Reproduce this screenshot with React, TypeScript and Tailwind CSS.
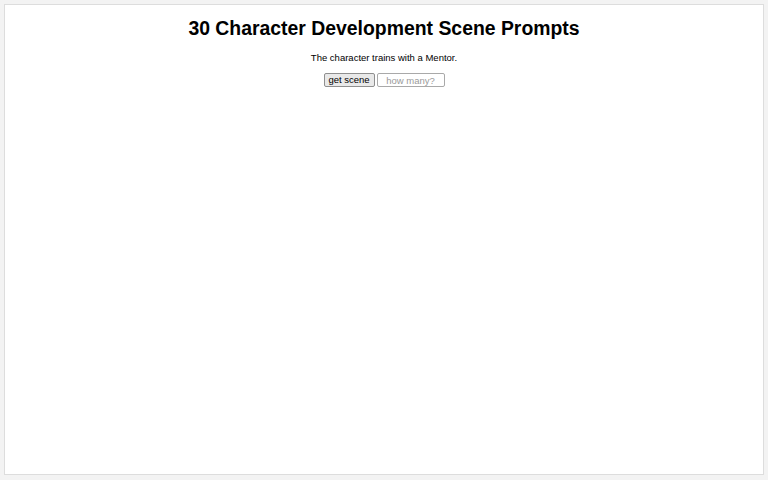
import { useState } from "react";

const App = () => {
    const [count, setCount] = useState("");

    return (
        <div className="min-h-[480px] bg-[#f3f3f3] p-1 font-['Liberation_Sans',Arial,sans-serif]">
            <div className="h-[471px] bg-white border border-[#dddddd] flex flex-col items-center">
                <h1 className="mt-[12px] text-[19.4px] leading-[22px] font-bold text-black">
                    30 Character Development Scene Prompts
                </h1>
                <p className="mt-[13px] text-[9.5px] leading-[12px] text-black">
                    The character trains with a Mentor.
                </p>
                <div className="mt-[9px] flex items-center gap-[2px]">
                    <button className="h-[14px] w-[51px] text-[9.5px] leading-[12px] text-black bg-[#e9e9e9] border border-[#8f8f8f] rounded-[2px]">
                        get scene
                    </button>
                    <input
                        value={count}
                        onChange={(e) => setCount(e.target.value)}
                        placeholder="how many?"
                        className="h-[14px] w-[68px] text-center text-[9.5px] leading-[12px] border border-[#a9a9a9] rounded-[2px] placeholder:text-[#9a9a9a] outline-none"
                    />
                </div>
            </div>
        </div>
    );
};

export default App;
